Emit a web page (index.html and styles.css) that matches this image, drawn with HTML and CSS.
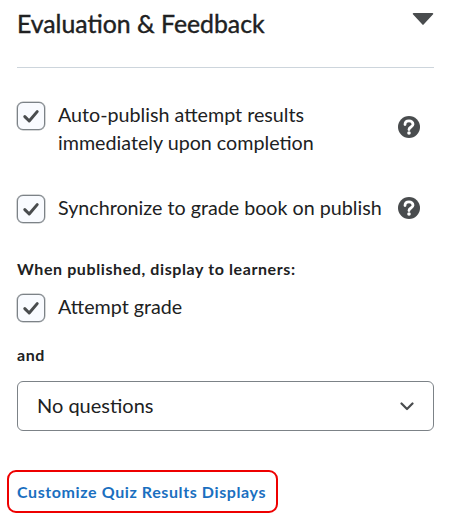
FILE: index.html
```html
<!DOCTYPE html>
<html lang="en">
<head>
    <meta charset="UTF-8">
    <title>Evaluation &amp; Feedback</title>
    <link rel="stylesheet" href="styles.css">
</head>
<body>
    <div class="panel">
        <div class="panel-header">
            <h2>Evaluation &amp; Feedback</h2>
            <svg class="caret" viewBox="0 0 22 14"><path d="M1.5 1h19a.8.8 0 0 1 .6 1.3L11.6 12.6a.8.8 0 0 1-1.2 0L.9 2.3A.8.8 0 0 1 1.5 1z"/></svg>
        </div>

        <div class="option option-first">
            <span class="checkbox">
                <svg viewBox="0 0 26 26"><path d="M6.8 13.6l4.4 4.4 8-9.4"/></svg>
            </span>
            <span class="option-label">Auto-publish attempt results immediately upon completion</span>
            <svg class="help" viewBox="0 0 22 22"><circle cx="11" cy="11" r="11"/><path d="M7 8.6c0-2.3 1.7-3.8 4-3.8s4 1.4 4 3.4c0 2.9-4 2.7-4 5.4"/><circle class="help-dot" cx="11" cy="17" r="1.8"/></svg>
        </div>

        <div class="option option-second">
            <span class="checkbox">
                <svg viewBox="0 0 26 26"><path d="M6.8 13.6l4.4 4.4 8-9.4"/></svg>
            </span>
            <span class="option-label">Synchronize to grade book on publish</span>
            <svg class="help" viewBox="0 0 22 22"><circle cx="11" cy="11" r="11"/><path d="M7 8.6c0-2.3 1.7-3.8 4-3.8s4 1.4 4 3.4c0 2.9-4 2.7-4 5.4"/><circle class="help-dot" cx="11" cy="17" r="1.8"/></svg>
        </div>

        <div class="field-label display-label">When published, display to learners:</div>

        <div class="option option-third">
            <span class="checkbox">
                <svg viewBox="0 0 26 26"><path d="M6.8 13.6l4.4 4.4 8-9.4"/></svg>
            </span>
            <span class="option-label">Attempt grade</span>
        </div>

        <div class="field-label and-label">and</div>

        <div class="select">
            <span class="select-value">No questions</span>
            <svg class="chevron" viewBox="0 0 14 9"><path d="M1.5 1.5L7 7l5.5-5.5"/></svg>
        </div>

        <div class="link-box">
            <a href="#">Customize Quiz Results Displays</a>
        </div>
    </div>
</body>
</html>
```

FILE: styles.css
```css
* {
    margin: 0;
    padding: 0;
    box-sizing: border-box;
}

body {
    background: white;
    color: #202122;
    font-family: Lato, "Open Sans", sans-serif;
    overflow: hidden;
}

.panel {
    width: 458px;
    height: 519px;
    padding: 0 24px 0 17px;
}

.panel-header {
    display: flex;
    justify-content: space-between;
    align-items: flex-start;
    height: 68px;
    border-bottom: 1px solid #cdd5dc;
    padding-top: 9px;
}

.panel-header h2 {
    font-size: 24.8px;
    line-height: 30px;
    font-weight: 400;
    -webkit-text-stroke: 0.4px #202122;
}

.caret {
    width: 22px;
    height: 14px;
    margin-top: 3px;
    fill: #494c4e;
}

.option {
    display: flex;
    align-items: flex-start;
}

.option-first {
    margin-top: 34px;
}

.option-second {
    margin-top: 38px;
}

.option-third {
    margin-top: 15px;
}

.checkbox {
    flex: none;
    width: 28px;
    height: 28px;
    border: 1px solid #7c8287;
    border-radius: 6px;
    background: #f9fbff;
    margin-right: 13px;
    box-shadow: 0 0 0 0.5px #a9adb0;
}

.checkbox svg {
    display: block;
    width: 26px;
    height: 26px;
    fill: none;
    stroke: #494c4e;
    stroke-width: 3;
    stroke-linecap: round;
    stroke-linejoin: round;
}

.option-label {
    width: 331px;
    margin-top: -1px;
    font-size: 19.7px;
    line-height: 28px;
}

.help {
    flex: none;
    width: 22px;
    height: 22px;
    margin-left: 9px;
    margin-top: 14px;
    fill: #494c4e;
}

.option-second .help {
    margin-top: 2px;
}

.help path {
    fill: none;
    stroke: white;
    stroke-width: 2.8;
    stroke-linecap: round;
}

.help .help-dot {
    fill: white;
}

.field-label {
    font-size: 16px;
    line-height: 20px;
    font-weight: 700;
    letter-spacing: 0.6px;
}

.display-label {
    margin-top: 36px;
}

.and-label {
    margin-top: 23px;
}

.select {
    display: flex;
    justify-content: space-between;
    align-items: center;
    width: 417px;
    height: 50px;
    margin-top: 16px;
    padding: 0 19px;
    border: 1px solid #7c8287;
    border-radius: 6px;
    font-size: 20px;
}

.select-value {
    margin-top: -3px;
}

.chevron {
    width: 14px;
    height: 9px;
    fill: none;
    stroke: #494c4e;
    stroke-width: 2.2;
    stroke-linecap: round;
    stroke-linejoin: round;
}

.link-box {
    width: 271px;
    height: 43px;
    margin-top: 39px;
    margin-left: -10px;
    padding-left: 8px;
    border: 2px solid #ee0000;
    border-radius: 9px;
    display: flex;
    align-items: center;
}

.link-box a {
    color: #1a6fc0;
    font-size: 16px;
    font-weight: 700;
    letter-spacing: 0.6px;
    text-decoration: none;
}
```
